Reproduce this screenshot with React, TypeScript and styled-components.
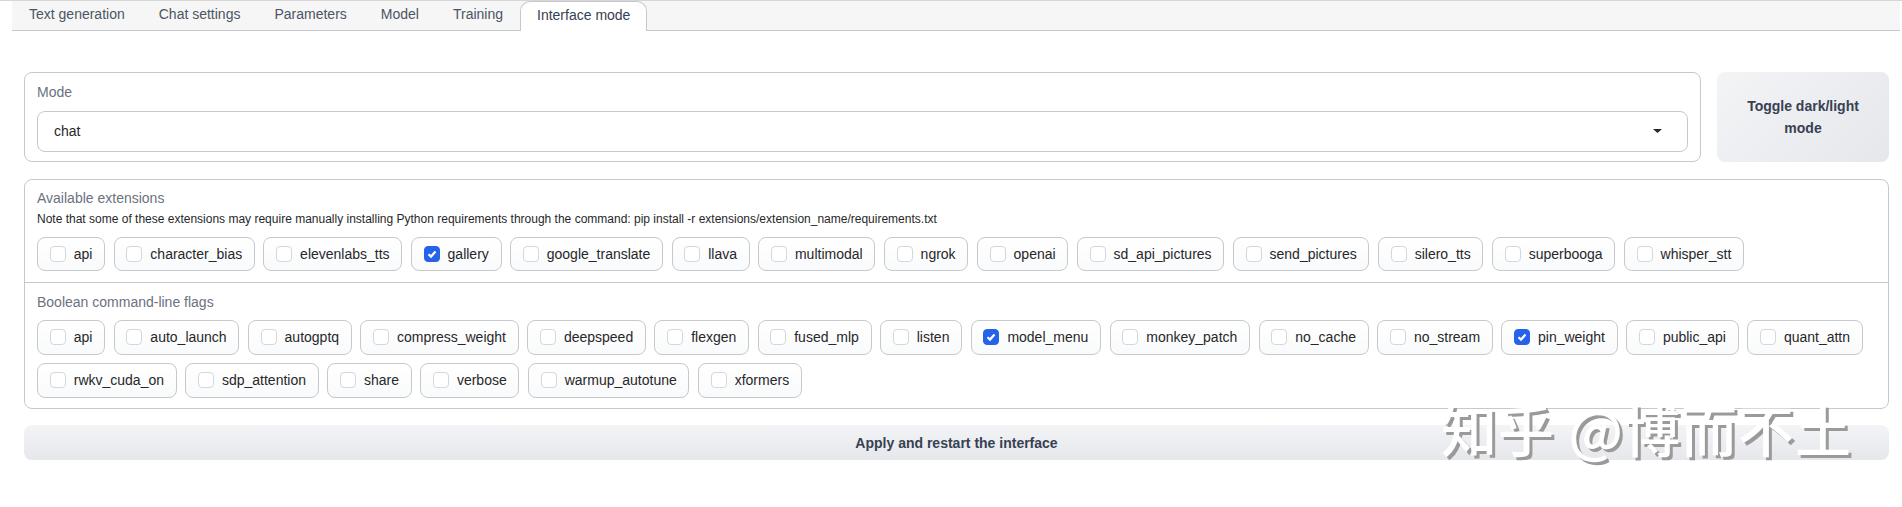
import React from "react";
import styled, { createGlobalStyle } from "styled-components";

const Global = createGlobalStyle`
  html, body { margin: 0; padding: 0; background: #fff; }
  body { font-family: "Liberation Sans", Arial, sans-serif; color: #374151; }
`;

const Page = styled.div`
  position: relative;
  width: 1902px;
  height: 507px;
  overflow: hidden;
  border-top: 1px solid #d6d6d6;
  box-sizing: border-box;
`;

const TabBar = styled.nav`
  display: flex;
  margin: 0 2px 0 12px;
  height: 29px;
  background: #f6f6f6;
  border-bottom: 1px solid #c6c8cc;
  box-sizing: content-box;
`;

const Tab = styled.div<{ $active?: boolean }>`
  padding: 0 17px;
  height: 29px;
  line-height: 27px;
  font-size: 14px;
  color: ${(p) => (p.$active ? "#374151" : "#4b5563")};
  box-sizing: border-box;
  ${(p) =>
    p.$active &&
    `
    background: #fff;
    height: 30px;
    margin-bottom: -1px;
    border: 1px solid #c6c8cc;
    border-bottom: none;
    border-radius: 10px 10px 0 0;
    padding: 0 16px;
  `}
`;

const Content = styled.main`
  padding: 40.7px 13px 0 24px;
  display: flex;
  flex-direction: column;
  gap: 16.5px;
`;

const TopRow = styled.div`
  display: flex;
  gap: 16px;
  height: 90.7px;
`;

const Panel = styled.section`
  background: #fff;
  border: 1px solid #c6c8cc;
  border-radius: 8px;
  box-sizing: border-box;
`;

const ModePanel = styled(Panel)`
  flex: 1;
  padding: 11px 12px 0;
`;

const Label = styled.div`
  font-size: 14px;
  line-height: 16px;
  color: #6b7280;
`;

const Select = styled.div`
  margin-top: 11px;
  height: 41px;
  box-sizing: border-box;
  border: 1px solid #c6c8cc;
  border-radius: 8px;
  display: flex;
  align-items: center;
  justify-content: space-between;
  padding: 0 25px 1px 16px;
  font-size: 14px;
  color: #27272a;
`;

const Arrow = styled.svg`
  width: 9px;
  height: 4px;
  fill: #27272a;
`;

const ToggleButton = styled.button`
  width: 172px;
  flex: none;
  border: none;
  border-radius: 8px;
  background: linear-gradient(135deg, #f3f4f6, #e5e7eb);
  font-family: inherit;
  font-size: 14px;
  font-weight: 700;
  line-height: 22px;
  color: #374151;
  padding: 0 20px;
`;

const ExtPanel = styled(Panel)`
  height: 229.7px;
`;

const Section = styled.div`
  padding: 10.5px 12px 0;
`;

const FlagSection = styled(Section)`
  border-top: 1px solid #c6c8cc;
`;

const Note = styled.div`
  font-size: 12px;
  line-height: 14px;
  margin-top: 6px;
  color: #27272a;
`;

const Chips = styled.div<{ $top: number }>`
  display: flex;
  flex-wrap: wrap;
  gap: 8.5px;
  margin-top: ${(p) => p.$top}px;
  margin-bottom: 11px;
`;

const Chip = styled.label`
  display: flex;
  align-items: center;
  gap: 8px;
  height: 34.5px;
  padding: 0 11.72px;
  box-sizing: border-box;
  border: 1px solid #c6c8cc;
  border-radius: 8px;
  background: linear-gradient(180deg, #fff, #f9fafb);
  font-size: 14px;
  color: #27272a;
`;

const Box = styled.span<{ $checked?: boolean }>`
  width: 16px;
  height: 16px;
  border-radius: 4px;
  box-sizing: border-box;
  display: flex;
  align-items: center;
  justify-content: center;
  background: ${(p) => (p.$checked ? "#2563eb" : "#fff")};
  border: 1px solid ${(p) => (p.$checked ? "#2563eb" : "#d4d7dc")};
`;

const Check = styled.svg`
  width: 10px;
  height: 10px;
  fill: none;
  stroke: #fff;
  stroke-width: 2.2;
`;

const ApplyButton = styled.button`
  height: 35px;
  border: none;
  border-radius: 8px;
  background: linear-gradient(180deg, #f3f4f6, #e5e7eb);
  font-family: inherit;
  font-size: 14px;
  font-weight: 700;
  color: #374151;
  width: 100%;
`;

const Watermark = styled.div`
  position: absolute;
  left: 1441px;
  top: 396px;
  font-family: "Noto Sans CJK SC", "Liberation Sans", sans-serif;
  font-size: 56px;
  font-weight: 500;
  line-height: 62px;
  letter-spacing: 1px;
  white-space: nowrap;
  color: #fff;
  text-shadow: 3px 3px 0 #9a9a9a;
`;

const tabs = ["Text generation", "Chat settings", "Parameters", "Model", "Training"];
const extensions = ["api", "character_bias", "elevenlabs_tts", "gallery", "google_translate", "llava", "multimodal", "ngrok", "openai", "sd_api_pictures", "send_pictures", "silero_tts", "superbooga", "whisper_stt"];
const flags = ["api", "auto_launch", "autogptq", "compress_weight", "deepspeed", "flexgen", "fused_mlp", "listen", "model_menu", "monkey_patch", "no_cache", "no_stream", "pin_weight", "public_api", "quant_attn", "rwkv_cuda_on", "sdp_attention", "share", "verbose", "warmup_autotune", "xformers"];
const checked = new Set(["gallery", "model_menu", "pin_weight"]);

function ChipItem({ name }: { name: string }) {
  const on = checked.has(name);
  return (
    <Chip>
      <Box $checked={on}>
        {on && (
          <Check viewBox="0 0 10 10">
            <path d="M1.5 5.2 L4 7.6 L8.5 2.6" />
          </Check>
        )}
      </Box>
      {name}
    </Chip>
  );
}

export default function App() {
  return (
    <Page>
      <Global />
      <TabBar>
        {tabs.map((t) => (
          <Tab key={t}>{t}</Tab>
        ))}
        <Tab $active>Interface mode</Tab>
      </TabBar>
      <Content>
        <TopRow>
          <ModePanel>
            <Label>Mode</Label>
            <Select>
              chat
              <Arrow viewBox="0 0 9 4">
                <path d="M0 0 H9 L4.5 4 Z" />
              </Arrow>
            </Select>
          </ModePanel>
          <ToggleButton>Toggle dark/light mode</ToggleButton>
        </TopRow>
        <ExtPanel>
          <Section>
            <Label>Available extensions</Label>
            <Note>Note that some of these extensions may require manually installing Python requirements through the command: pip install -r extensions/extension_name/requirements.txt</Note>
            <Chips $top={10.5}>
              {extensions.map((n) => (
                <ChipItem key={n} name={n} />
              ))}
            </Chips>
          </Section>
          <FlagSection>
            <Label>Boolean command-line flags</Label>
            <Chips $top={10.3}>
              {flags.map((n) => (
                <ChipItem key={n} name={n} />
              ))}
            </Chips>
          </FlagSection>
        </ExtPanel>
        <ApplyButton>Apply and restart the interface</ApplyButton>
      </Content>
      <Watermark>知乎 @博而不土</Watermark>
    </Page>
  );
}
